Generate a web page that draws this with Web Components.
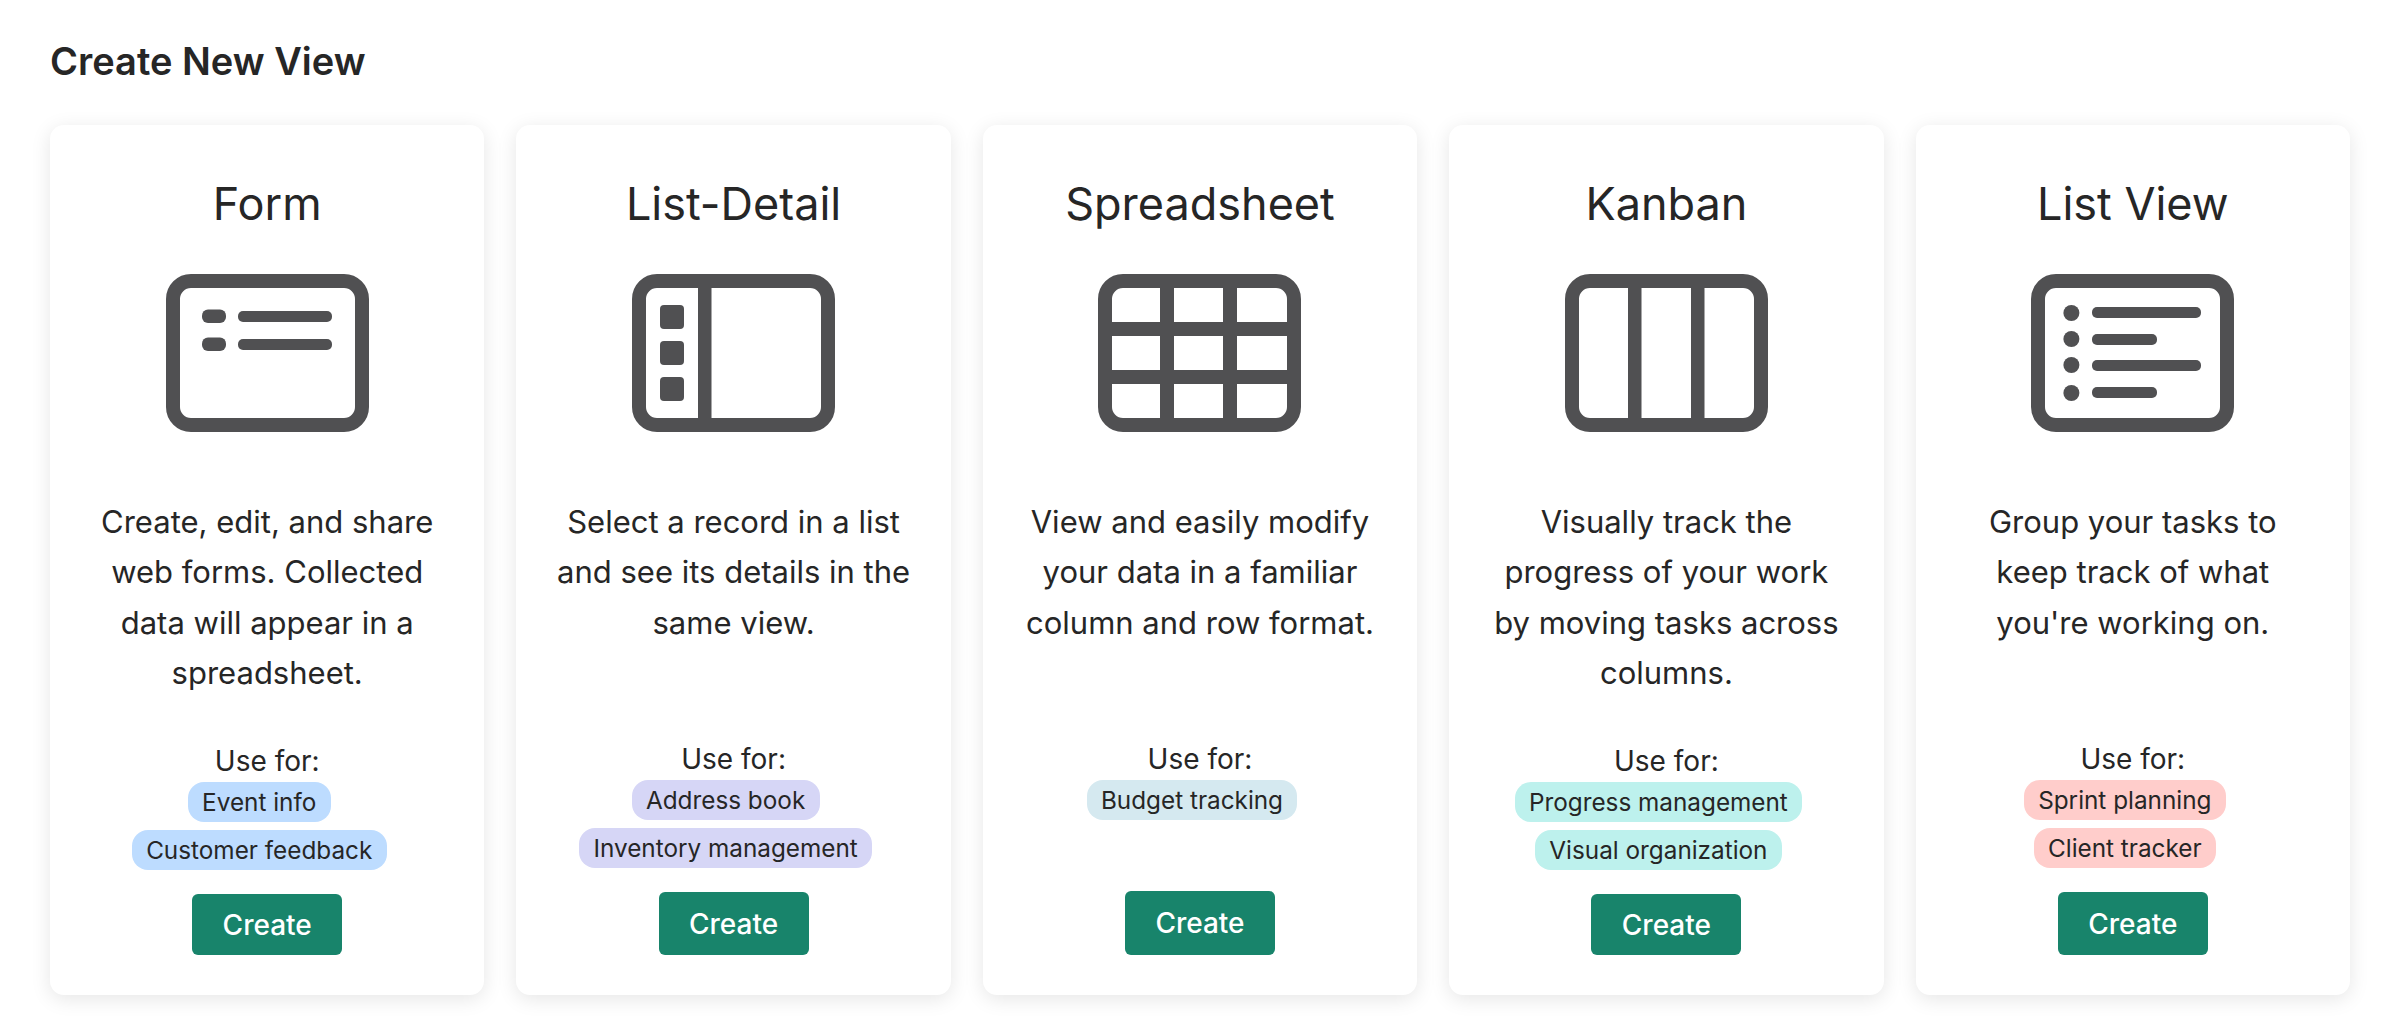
<!DOCTYPE html>
<html lang="en">
<head>
<meta charset="utf-8">
<title>Create New View</title>
<style>
  html, body { margin: 0; background: #fff; }
  body { font-family: Inter, "Liberation Sans", sans-serif; color: #262626; }
  .page { padding: 39px 42px 29px 50px; }
  .grid { display: grid; grid-template-columns: repeat(5, 1fr); gap: 32px; }
  h1 { margin: 0 0 41px; font-size: 38px; line-height: 45px; font-weight: 600; }
</style>
</head>
<body>
<div class="page">
  <h1>Create New View</h1>
  <div class="grid">
    <view-card heading="Form" icon="form" desc-height="200" btn-height="61" tint="#bddcff">
      Create, edit, and share web forms. Collected data will appear in a spreadsheet.
      <view-chip slot="chips">Event info</view-chip>
      <view-chip slot="chips">Customer feedback</view-chip>
    </view-card>
    <view-card heading="List-Detail" icon="detail" desc-height="198" btn-height="63" tint="#d6d6f6">
      Select a record in a list and see its details in the same view.
      <view-chip slot="chips">Address book</view-chip>
      <view-chip slot="chips">Inventory management</view-chip>
    </view-card>
    <view-card heading="Spreadsheet" icon="sheet" desc-height="198" btn-height="64" tint="#d5e9f0">
      View and easily modify your data in a familiar column and row format.
      <view-chip slot="chips">Budget tracking</view-chip>
    </view-card>
    <view-card heading="Kanban" icon="kanban" desc-height="200" btn-height="61" tint="#bdf1ed">
      Visually track the progress of your work by moving tasks across columns.
      <view-chip slot="chips">Progress management</view-chip>
      <view-chip slot="chips">Visual organization</view-chip>
    </view-card>
    <view-card heading="List View" icon="list" desc-height="198" btn-height="63" tint="#ffcdcb">
      Group your tasks to keep track of what you're working on.
      <view-chip slot="chips">Sprint planning</view-chip>
      <view-chip slot="chips">Client tracker</view-chip>
    </view-card>
  </div>
</div>

<script>
const ICONS = {
  form: `
    <rect x="36" y="35.5" width="24" height="13.5" rx="6"/>
    <rect x="72" y="37" width="94" height="11" rx="5"/>
    <rect x="36" y="63.5" width="24" height="13.5" rx="6"/>
    <rect x="72" y="65" width="94" height="11" rx="5"/>`,
  detail: `
    <rect x="66" y="7" width="13.5" height="144"/>
    <rect x="28" y="31" width="24" height="24" rx="4"/>
    <rect x="28" y="67" width="24" height="24" rx="4"/>
    <rect x="28" y="103" width="24" height="24" rx="4"/>`,
  sheet: `
    <rect x="62" y="7" width="14" height="144"/>
    <rect x="125" y="7" width="14" height="144"/>
    <rect x="7" y="48" width="189" height="14"/>
    <rect x="7" y="96" width="189" height="14"/>`,
  kanban: `
    <rect x="63" y="7" width="13.5" height="144"/>
    <rect x="126" y="7" width="13.5" height="144"/>`,
  list: `
    <circle cx="40.4" cy="39" r="8"/>
    <circle cx="40.4" cy="65" r="8"/>
    <circle cx="40.4" cy="91" r="8"/>
    <circle cx="40.4" cy="119" r="8"/>
    <rect x="61" y="33" width="109" height="11" rx="5"/>
    <rect x="61" y="60" width="65" height="11" rx="5"/>
    <rect x="61" y="86" width="109" height="11" rx="5"/>
    <rect x="61" y="113" width="65" height="11" rx="5"/>`
};

class ViewIcon extends HTMLElement {
  static get observedAttributes() {
    return ['name'];
  }

  constructor() {
    super();
    this.attachShadow({ mode: 'open' });
  }

  attributeChangedCallback() {
    const inner = ICONS[this.getAttribute('name')] || '';
    this.shadowRoot.innerHTML = `
      <style>
        :host { display: block; width: 203px; height: 158px; }
        svg { display: block; fill: #505052; }
        .frame { fill: none; stroke: #505052; stroke-width: 14; }
      </style>
      <svg width="203" height="158" viewBox="0 0 203 158" aria-hidden="true">
        <rect class="frame" x="7" y="7" width="189" height="144" rx="18"/>
        ${inner}
      </svg>`;
  }
}
customElements.define('view-icon', ViewIcon);

const chipTemplate = document.createElement('template');
chipTemplate.innerHTML = `
  <style>
    :host {
      display: inline-block;
      height: 40px;
      margin: 0 16px 8px 0;
      padding: 0 14.4px;
      border-radius: 16px;
      background: var(--chip-tint, #eee);
      color: #262626;
      font-size: 24.3px;
      line-height: 40px;
      white-space: nowrap;
    }
  </style>
  <slot></slot>
`;

class ViewChip extends HTMLElement {
  constructor() {
    super();
    this.attachShadow({ mode: 'open' });
    this.shadowRoot.appendChild(chipTemplate.content.cloneNode(true));
  }
}
customElements.define('view-chip', ViewChip);

const buttonTemplate = document.createElement('template');
buttonTemplate.innerHTML = `
  <style>
    :host { display: block; }
    button {
      display: block;
      width: 150px;
      height: 100%;
      padding: 0;
      border: 0;
      border-radius: 6px;
      background: #18846b;
      color: #fff;
      font-family: inherit;
      font-size: 28px;
      font-weight: 500;
      cursor: pointer;
    }
  </style>
  <button part="button"><slot></slot></button>
`;

class ViewButton extends HTMLElement {
  constructor() {
    super();
    this.attachShadow({ mode: 'open' });
    this.shadowRoot.appendChild(buttonTemplate.content.cloneNode(true));
  }
}
customElements.define('view-button', ViewButton);

const cardTemplate = document.createElement('template');
cardTemplate.innerHTML = `
  <style>
    :host {
      display: flex;
      flex-direction: column;
      align-items: center;
      box-sizing: border-box;
      height: 870px;
      padding: 49px 40px 40px;
      border-radius: 14px;
      background: #fff;
      box-shadow: 0 4px 20px rgba(0, 0, 0, 0.1);
      text-align: center;
    }
    h2 {
      margin: 0 0 40px;
      font-size: 45px;
      line-height: 60px;
      font-weight: 400;
    }
    .desc {
      margin-top: 65px;
      font-size: 31px;
      line-height: 50.4px;
    }
    .use {
      margin-top: 44px;
      font-size: 28px;
      line-height: 41px;
    }
    .chips {
      display: flex;
      flex-wrap: wrap;
      justify-content: center;
    }
    view-button { margin-top: auto; }
  </style>
  <h2></h2>
  <view-icon></view-icon>
  <div class="desc"><slot></slot></div>
  <div class="use">Use for:</div>
  <div class="chips"><slot name="chips"></slot></div>
  <view-button>Create</view-button>
`;

class ViewCard extends HTMLElement {
  constructor() {
    super();
    this.attachShadow({ mode: 'open' });
    this.shadowRoot.appendChild(cardTemplate.content.cloneNode(true));
  }

  connectedCallback() {
    const root = this.shadowRoot;
    root.querySelector('h2').textContent = this.getAttribute('heading');
    root.querySelector('view-icon').setAttribute('name', this.getAttribute('icon'));
    root.querySelector('.desc').style.height = this.getAttribute('desc-height') + 'px';
    root.querySelector('view-button').style.height = this.getAttribute('btn-height') + 'px';
    this.style.setProperty('--chip-tint', this.getAttribute('tint'));
  }
}
customElements.define('view-card', ViewCard);
</script>
</body>
</html>
